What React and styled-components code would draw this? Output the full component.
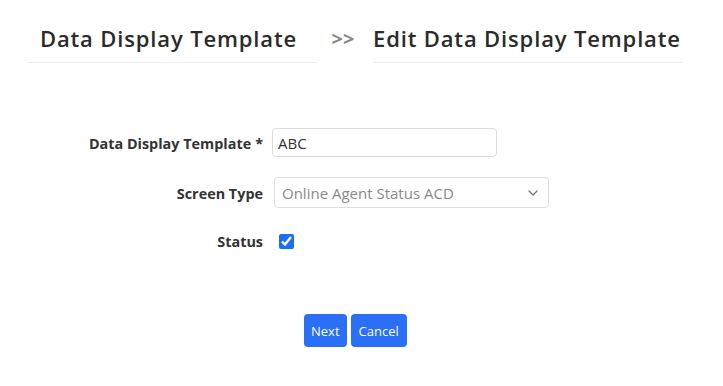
import React, { useState } from 'react'
import styled, { createGlobalStyle } from 'styled-components'
import { FiChevronDown } from 'react-icons/fi'

const GlobalStyle = createGlobalStyle`
    body {
        margin: 0;
        background: #ffffff;
        font-family: "Open Sans", "Noto Sans", sans-serif;
        color: #212529;
    }
`

const Page = styled.div`
    width: 723px;
    height: 386px;
    padding-top: 22px;
    box-sizing: border-box;
`

const Header = styled.div`
    display: flex;
    align-items: flex-start;
    padding-left: 28px;
`

const Crumb = styled.div`
    width: ${(p) => p.width}px;
    box-sizing: border-box;
    padding-right: ${(p) => p.shift || 0}px;
    text-align: ${(p) => p.align || 'left'};
    font-size: 22px;
    font-weight: 600;
    letter-spacing: 0.85px;
    color: #2b2b2b;
    line-height: 32px;
    padding-bottom: 8px;
    border-bottom: 1px solid #eeeeee;
    white-space: nowrap;
`

const Separator = styled.div`
    width: 52px;
    padding-right: 4px;
    text-align: center;
    font-size: 20px;
    font-weight: 700;
    color: #888888;
    line-height: 34px;
`

const Form = styled.div`
    display: grid;
    grid-template-columns: 263px auto;
    grid-template-rows: 29px 31px 22px;
    column-gap: 9px;
    row-gap: 20px;
    margin-top: 65px;
    align-items: center;
`

const Label = styled.label`
    text-align: right;
    font-size: 14.4px;
    font-weight: 700;
    color: #333333;
    padding-top: ${(p) => p.drop || 2}px;
`

const Star = styled.span`
    margin-left: 4px;
`

const Input = styled.input`
    width: 225px;
    height: 29px;
    box-sizing: border-box;
    border: 1px solid #dcdcdc;
    border-radius: 4px;
    padding: 0 5px;
    font-family: inherit;
    font-size: 15px;
    color: #333333;
    outline: none;
`

const SelectBox = styled.div`
    position: relative;
    margin-left: 2px;
    width: 275px;
    height: 31px;
    box-sizing: border-box;
    border: 1px solid #e0e0e0;
    border-radius: 4px;
    display: flex;
    align-items: center;
    padding: 0 7px;
    font-size: 15px;
    color: #8a8a8a;
    justify-content: space-between;
`

const Chevron = styled(FiChevronDown)`
    font-size: 16px;
    color: #777777;
`

const CheckCell = styled.div`
    display: flex;
    align-items: center;
    padding-top: 4px;
`

const Check = styled.input`
    margin: 0 0 0 7px;
    width: 15px;
    height: 15px;
    accent-color: #1a6ef5;
`

const Buttons = styled.div`
    display: flex;
    gap: 4px;
    padding-left: 304px;
    margin-top: 64px;
`

const Button = styled.button`
    height: 33px;
    padding: 0 ${(p) => p.pad}px;
    border: none;
    border-radius: 4px;
    background: #2a6ff6;
    color: #ffffff;
    font-family: inherit;
    font-size: 13px;
`

export default function App() {
    const [name, setName] = useState('ABC')
    const [active, setActive] = useState(true)
    return (
        <Page>
            <GlobalStyle />
            <Header>
                <Crumb width={289} align="center" shift={8}>Data Display Template</Crumb>
                <Separator>&gt;&gt;</Separator>
                <Crumb width={309}>Edit Data Display Template</Crumb>
            </Header>
            <Form>
                <Label>Data Display Template<Star>*</Star></Label>
                <Input value={name} onChange={(e) => setName(e.target.value)} />
                <Label>Screen Type</Label>
                <SelectBox>
                    Online Agent Status ACD
                    <Chevron />
                </SelectBox>
                <Label drop={4}>Status</Label>
                <CheckCell>
                    <Check type="checkbox" checked={active} onChange={(e) => setActive(e.target.checked)} />
                </CheckCell>
            </Form>
            <Buttons>
                <Button pad={7}>Next</Button>
                <Button pad={8}>Cancel</Button>
            </Buttons>
        </Page>
    )
}
